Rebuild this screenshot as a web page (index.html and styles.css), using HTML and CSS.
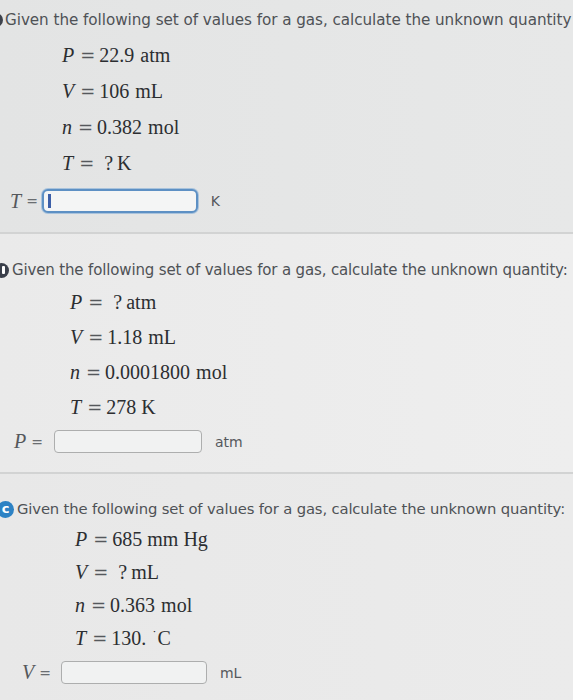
FILE: index.html
```html
<!DOCTYPE html>
<html>
<head>
<meta charset="utf-8">
<link rel="stylesheet" href="styles.css">
</head>
<body>
<section class="q q1">
  <p class="prompt"><span class="badge badge-a"></span>Given the following set of values for a gas, calculate the unknown quantity</p>
  <div class="givens">
    <div class="line"><i>P</i><span class="op">=</span>22.9<span class="u">atm</span></div>
    <div class="line"><i>V</i><span class="op">=</span>106<span class="u">mL</span></div>
    <div class="line"><i>n</i><span class="op">=</span>0.382<span class="u">mol</span></div>
    <div class="line"><i>T</i><span class="op">=</span><span class="q-mark">?</span>K</div>
  </div>
  <div class="answer">
    <span class="var">T</span><span class="eq">=</span>
    <span class="field focused"><span class="caret"></span></span>
    <span class="unit">K</span>
  </div>
</section>
<section class="q q2">
  <p class="prompt"><span class="badge badge-b"><span class="badge-mark"></span></span>Given the following set of values for a gas, calculate the unknown quantity:</p>
  <div class="givens">
    <div class="line"><i>P</i><span class="op">=</span><span class="q-mark">?</span>atm</div>
    <div class="line"><i>V</i><span class="op">=</span>1.18<span class="u">mL</span></div>
    <div class="line"><i>n</i><span class="op">=</span>0.0001800<span class="u">mol</span></div>
    <div class="line"><i>T</i><span class="op">=</span>278 K</div>
  </div>
  <div class="answer">
    <span class="var">P</span><span class="eq">=</span>
    <span class="field"></span>
    <span class="unit">atm</span>
  </div>
</section>
<section class="q q3">
  <p class="prompt"><span class="badge badge-c">c</span>Given the following set of values for a gas, calculate the unknown quantity:</p>
  <div class="givens">
    <div class="line"><i>P</i><span class="op">=</span>685 mm Hg</div>
    <div class="line"><i>V</i><span class="op">=</span><span class="q-mark">?</span>mL</div>
    <div class="line"><i>n</i><span class="op">=</span>0.363<span class="u">mol</span></div>
    <div class="line"><i>T</i><span class="op">=</span>130.<span class="u"><span class="deg">&#729;</span>C</span></div>
  </div>
  <div class="answer">
    <span class="var">V</span><span class="eq">=</span>
    <span class="field"></span>
    <span class="unit">mL</span>
  </div>
</section>
</body>
</html>
```
FILE: styles.css
```css
html, body {
  margin: 0;
  padding: 0;
}
body {
  width: 573px;
  height: 700px;
  overflow: hidden;
  background: #e9e9e9;
  font-family: "DejaVu Sans", Verdana, sans-serif;
  color: #4f5256;
}
.q {
  box-sizing: border-box;
  display: flex;
  flex-direction: column;
  border-bottom: 2px solid #d2d3d3;
}
.q1 {
  background: linear-gradient(90deg, #e3e4e4, #e7e8e8);
  height: 234px;
  padding-top: 10px;
}
.q2 {
  background: linear-gradient(90deg, #eaeaea, #eeeeee);
  height: 240px;
  padding-top: 26px;
}
.q3 {
  background: linear-gradient(90deg, #e8e8e8, #ebebeb);
  border-bottom: none;
  height: 226px;
  padding-top: 25px;
}
.prompt {
  margin: 0;
  height: 20px;
  line-height: 20px;
  font-size: 15px;
  white-space: nowrap;
  display: flex;
  align-items: center;
}
.q1 .prompt { font-size: 15.2px; letter-spacing: -0.05px; }
.q2 .prompt { font-size: 15px; letter-spacing: -0.15px; }
.q3 .prompt { font-size: 14.8px; letter-spacing: -0.15px; }
.badge {
  display: inline-flex;
  align-items: center;
  justify-content: center;
  border-radius: 50%;
  color: #fff;
  font-size: 12px;
  font-weight: bold;
  flex: none;
}
.badge-a {
  width: 14px;
  height: 14px;
  background: #3d424c;
  margin-left: -11px;
  margin-right: 2px;
}
.badge-b {
  width: 15px;
  height: 15px;
  background: #3a3f4a;
  margin-left: -6px;
  margin-right: 3px;
}
.badge-mark {
  width: 3px;
  height: 8px;
  margin-left: 3px;
  background: #ffffff;
  border-radius: 1px;
}
.badge-c {
  width: 17px;
  height: 17px;
  background: #2d82c4;
  margin-left: -3px;
  margin-right: 3px;
  font-size: 13px;
}
.givens {
  display: flex;
  flex-direction: column;
  font-family: "Liberation Serif", "Times New Roman", serif;
  font-size: 20px;
  color: #2c2e31;
}
.q1 .givens { margin-top: 7px; padding-left: 62px; }
.q2 .givens { margin-top: 5px; padding-left: 70px; }
.q3 .givens { margin-top: 4px; padding-left: 75px; }
.q1 .line { height: 36px; line-height: 36px; }
.q2 .line { height: 35px; line-height: 35px; }
.q3 .line { height: 33px; line-height: 33px; }
.line i {
  font-style: italic;
}
.op {
  font-family: "DejaVu Serif", serif;
  font-size: 18px;
  margin: 0 4px 0 6px;
  color: #55585c;
}
.u {
  margin-left: 6px;
}
.q-mark {
  margin-left: 6px;
  margin-right: 4px;
}
.deg {
  font-size: 13px;
  position: relative;
  top: -6px;
  margin-right: 1px;
}
.answer {
  display: flex;
  align-items: center;
}
.q1 .answer { margin-top: 8px; padding-left: 10px; height: 24px; }
.q2 .answer { margin-top: 5px; padding-left: 14px; height: 23px; }
.q3 .answer { margin-top: 6px; padding-left: 22px; height: 23px; }
.var {
  font-family: "Liberation Serif", "Times New Roman", serif;
  font-style: italic;
  font-size: 20px;
  color: #55585c;
}
.eq {
  font-size: 14px;
  color: #6a6d71;
  margin-left: 5px;
}
.field {
  display: flex;
  align-items: center;
  box-sizing: border-box;
  background: #f1f2f2;
  border: 1px solid #adaeae;
  border-radius: 4px;
  height: 23px;
}
.q1 .field { margin-left: 4px; width: 156px; height: 24px; }
.q2 .field { margin-left: 11px; width: 148px; }
.q3 .field { margin-left: 10px; width: 146px; }
.field.focused {
  border: 2px solid #5d90c4;
  border-radius: 6px;
  box-shadow: 0 0 0 1px #a9c3dc;
  background: #f4f5f5;
}
.caret {
  width: 3px;
  height: 14px;
  margin-left: 4px;
  background: #3c5fa8;
}
.unit {
  font-size: 14px;
  color: #55585c;
  margin-left: 13px;
}
```
